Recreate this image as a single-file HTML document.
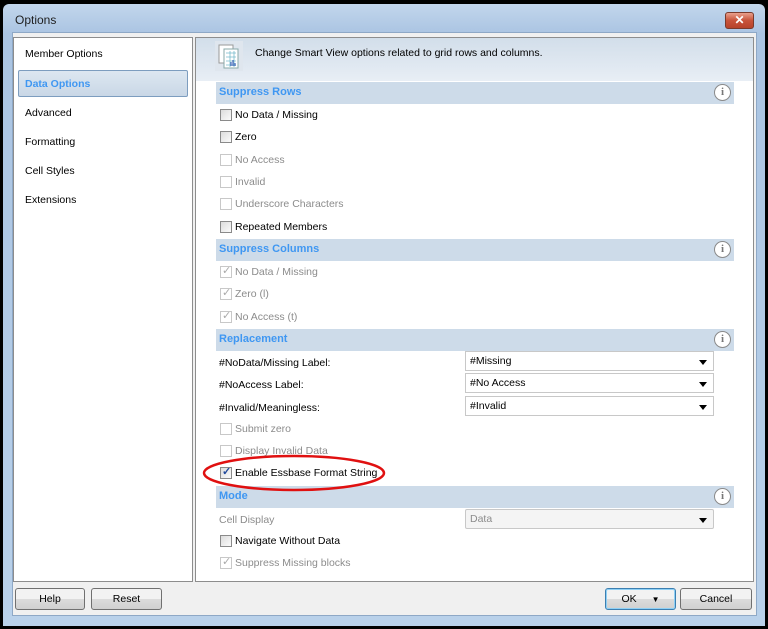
<!DOCTYPE html>
<html><head><style>
*{margin:0;padding:0;box-sizing:border-box}
body{width:768px;height:629px;background:#000;position:relative;overflow:hidden;font-family:"Liberation Sans",sans-serif;font-size:10.5px;color:#000}
.a{position:absolute;white-space:nowrap}
.win{left:3px;top:4px;width:762px;height:622px;background:linear-gradient(#c2d6ec,#aac4e2 30px,#b9d1ea);border-radius:6px 6px 0 0}
.client{left:12px;top:32px;width:745px;height:584px;background:#f0f0f0;border:1px solid #8ea8c6}
.panel{background:#fff;border:1px solid #8d8d8d}
.nav{left:25px;font-size:10.5px}
.bar{left:216px;width:518px;height:22px;background:#cddbe9;color:#3f97f2;font-weight:bold;font-size:11px;padding:4px 0 0 3px}
.info{position:absolute;right:3px;top:2px;width:17px;height:17px;border:1.5px solid #8a8a8a;border-radius:50%;background:#fff;color:#777;font:bold 11px "Liberation Serif",serif;text-align:center;line-height:14px}
.cb{left:220px;width:12px;height:12px;border:1px solid #8a8a8a;background:linear-gradient(135deg,#dcdcdc,#fbfbfb)}
.cb.d{border-color:#c8c8c8;background:#fff}
.lbl{left:235px}
.g{color:#8c8c8c}
.chk::after{content:"✓";position:absolute;left:1px;top:-3px;font-size:11px;color:#aaa}
.chk.b::after{color:#224a9c;font-weight:bold}
.sel{left:465px;width:249px;height:20px;background:#fff;border:1px solid #c8c8c8;padding:3px 4px}
.sel::after{content:"";position:absolute;right:6px;top:8px;border:4px solid transparent;border-top:5px solid #000}
.btn{height:22px;border:1px solid #707070;border-radius:3px;background:linear-gradient(#f2f2f2 50%,#dcdcdc 50%,#d0d0d0);text-align:center;line-height:20px;font-size:10.5px}
</style></head><body>
<div class="a win"></div>
<div class="a" style="left:15px;top:13px;font-size:12px;color:#1e1e1e">Options</div>
<div class="a" style="left:725px;top:12px;width:29px;height:17px;border:1px solid #7a3a2c;border-radius:3px;background:linear-gradient(#e9a08c,#c8533a 50%,#b7432a);color:#fff;font-weight:bold;text-align:center;line-height:15px;font-size:12px">✕</div>
<div class="a client"></div>
<div class="a panel" style="left:13px;top:37px;width:180px;height:545px"></div>
<div class="a nav" style="top:48px">Member Options</div>
<div class="a" style="left:18px;top:70px;width:170px;height:27px;border:1px solid #7d9dbf;border-radius:2px;background:linear-gradient(#dde7f1,#c9d7e6)"></div>
<div class="a nav" style="top:78px;color:#3f97f2;font-weight:bold">Data Options</div>
<div class="a nav" style="top:107px">Advanced</div>
<div class="a nav" style="top:136px">Formatting</div>
<div class="a nav" style="top:165px">Cell Styles</div>
<div class="a nav" style="top:194px">Extensions</div>
<div class="a panel" style="left:195px;top:37px;width:559px;height:545px"></div>
<div class="a" style="left:196px;top:38px;width:557px;height:43px;background:linear-gradient(#d2deea,#e8eef5)"></div>
<svg class="a" style="left:214px;top:40px" width="30" height="32"><rect x="1" y="1" width="28" height="30" fill="#dfe6ee"/><rect x="5" y="5" width="14" height="18" fill="#fff" stroke="#999"/><rect x="10" y="9" width="14" height="19" fill="#fff" stroke="#8aa"/><path d="M12 13h10M12 17h10M12 21h10M12 25h10M16 11v16M20 11v16" stroke="#7bc" stroke-width=".8"/><path d="M17 26v-4M19 26v-6M21 26v-3" stroke="#46b" stroke-width="1.2"/></svg>
<div class="a" style="left:255px;top:47px">Change Smart View options related to grid rows and columns.</div>

<div class="a bar" style="top:82px">Suppress Rows<span class="info">i</span></div>
<div class="a cb" style="top:109px"></div><div class="a lbl" style="top:109px">No Data / Missing</div>
<div class="a cb" style="top:131px"></div><div class="a lbl" style="top:131px">Zero</div>
<div class="a cb d" style="top:154px"></div><div class="a lbl g" style="top:154px">No Access</div>
<div class="a cb d" style="top:176px"></div><div class="a lbl g" style="top:176px">Invalid</div>
<div class="a cb d" style="top:198px"></div><div class="a lbl g" style="top:198px">Underscore Characters</div>
<div class="a cb" style="top:221px"></div><div class="a lbl" style="top:221px">Repeated Members</div>

<div class="a bar" style="top:239px">Suppress Columns<span class="info">i</span></div>
<div class="a cb d chk" style="top:266px"></div><div class="a lbl g" style="top:266px">No Data / Missing</div>
<div class="a cb d chk" style="top:288px"></div><div class="a lbl g" style="top:288px">Zero (l)</div>
<div class="a cb d chk" style="top:311px"></div><div class="a lbl g" style="top:311px">No Access (t)</div>

<div class="a bar" style="top:329px">Replacement<span class="info">i</span></div>
<div class="a" style="left:219px;top:357px">#NoData/Missing Label:</div>
<div class="a sel" style="top:351px">#Missing</div>
<div class="a" style="left:219px;top:379px">#NoAccess Label:</div>
<div class="a sel" style="top:373px">#No Access</div>
<div class="a" style="left:219px;top:402px">#Invalid/Meaningless:</div>
<div class="a sel" style="top:396px">#Invalid</div>
<div class="a cb d" style="top:423px"></div><div class="a lbl g" style="top:423px">Submit zero</div>
<div class="a cb d" style="top:445px"></div><div class="a lbl g" style="top:445px">Display Invalid Data</div>
<div class="a cb chk b" style="top:467px"></div><div class="a lbl" style="top:467px">Enable Essbase Format String</div>

<div class="a bar" style="top:486px">Mode<span class="info">i</span></div>
<div class="a g" style="left:219px;top:514px">Cell Display</div>
<div class="a sel g" style="top:509px;background:#f4f4f4;border-radius:2px">Data</div>
<div class="a cb" style="top:535px"></div><div class="a lbl" style="top:535px">Navigate Without Data</div>
<div class="a cb d chk" style="top:557px"></div><div class="a lbl g" style="top:557px">Suppress Missing blocks</div>

<svg class="a" style="left:0;top:0" width="768" height="629"><ellipse cx="294" cy="473" rx="90" ry="17" fill="none" stroke="#e01010" stroke-width="2.5"/></svg>

<div class="a btn" style="left:15px;top:588px;width:70px">Help</div>
<div class="a btn" style="left:91px;top:588px;width:71px">Reset</div>
<div class="a btn" style="left:605px;top:588px;width:71px;border-color:#3c7fb1;box-shadow:inset 0 0 0 1px #8fd0f5">OK <span style="font-size:8px;margin-left:12px">▼</span></div>
<div class="a btn" style="left:680px;top:588px;width:72px">Cancel</div>
</body></html>
